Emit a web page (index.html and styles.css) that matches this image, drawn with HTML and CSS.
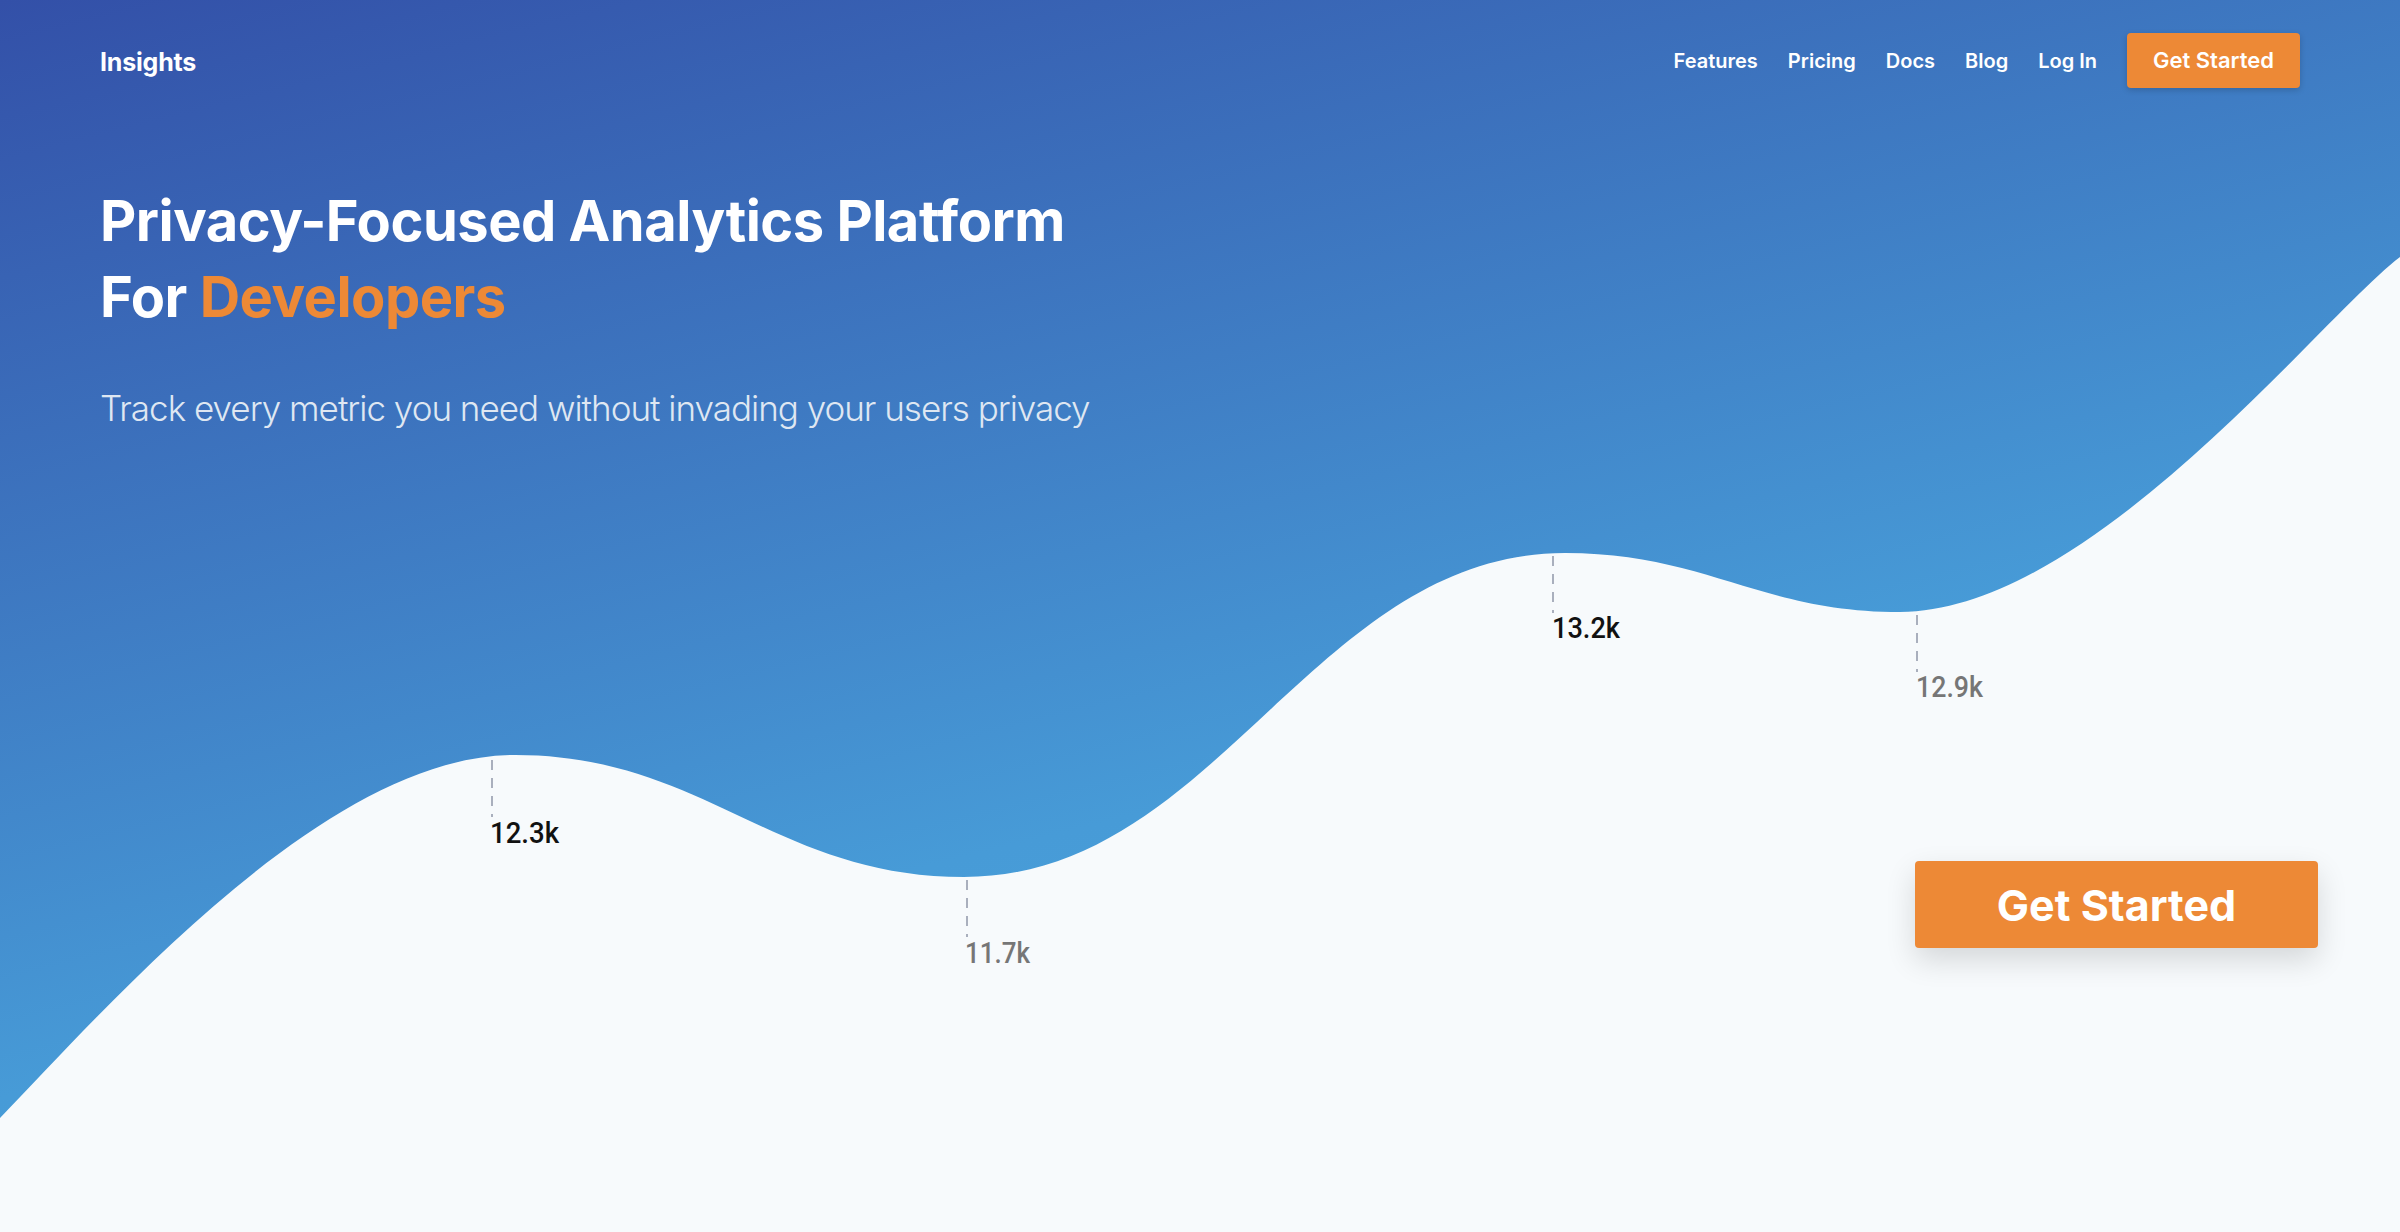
FILE: index.html
```html
<!DOCTYPE html>
<html lang="en">
<head>
<meta charset="utf-8">
<title>Insights</title>
<link rel="stylesheet" href="styles.css">
</head>
<body>
<div class="page">
  <svg class="chart" viewBox="0 0 2400 1232" width="2400" height="1232" aria-hidden="true">
    <path class="wave" d="M0,1118 C120,993 330,755 515,755 C704,755 775,877 964,877 C1216,877 1313,553 1565,553 C1705,553 1760,612 1900,612 C2090,612 2320,318 2400,257 L2400,1232 L0,1232 Z"/>
    <line class="tick" x1="492" y1="760" x2="492" y2="817"/>
    <line class="tick" x1="967" y1="880" x2="967" y2="937"/>
    <line class="tick" x1="1553" y1="556" x2="1553" y2="613"/>
    <line class="tick" x1="1917" y1="615" x2="1917" y2="672"/>
    <text class="val val-dark" x="490" y="843" textLength="69" lengthAdjust="spacingAndGlyphs">12.3k</text>
    <text class="val val-grey" x="965" y="963" textLength="65" lengthAdjust="spacingAndGlyphs">11.7k</text>
    <text class="val val-dark" x="1552" y="638" textLength="68" lengthAdjust="spacingAndGlyphs">13.2k</text>
    <text class="val val-grey" x="1916" y="697" textLength="67" lengthAdjust="spacingAndGlyphs">12.9k</text>
  </svg>

  <header class="nav">
    <a class="logo" href="#">Insights</a>
    <nav class="menu">
      <a class="menu-link" href="#">Features</a>
      <a class="menu-link" href="#">Pricing</a>
      <a class="menu-link" href="#">Docs</a>
      <a class="menu-link" href="#">Blog</a>
      <a class="menu-link" href="#">Log In</a>
      <a class="btn-small" href="#">Get Started</a>
    </nav>
  </header>

  <section class="hero">
    <h1 class="title">Privacy-Focused Analytics Platform<br>For <span class="accent">Developers</span></h1>
    <p class="subtitle">Track every metric you need without invading your users privacy</p>
  </section>

  <div class="cta-row">
    <a class="cta" href="#">Get Started</a>
  </div>
</div>
</body>
</html>
```

FILE: styles.css
```css
* { box-sizing: border-box; }

html, body {
  margin: 0;
  padding: 0;
  background: #f7fafc;
}

body {
  font-family: "Inter", "Liberation Sans", sans-serif;
  -webkit-font-smoothing: antialiased;
}

a { text-decoration: none; }

.page {
  position: relative;
  width: 2400px;
  height: 1232px;
  overflow: hidden;
  background: linear-gradient(166deg, #3350a8 0%, #479bd7 60%, #4fabe2 100%);
}

.chart {
  position: absolute;
  left: 0;
  top: 0;
  width: 2400px;
  height: 1232px;
}

.wave { fill: #f7fafc; }

.tick {
  stroke: #a9afbd;
  stroke-width: 2;
  stroke-dasharray: 10 8;
}

.val {
  font-family: "Roboto", "Liberation Sans", sans-serif;
  font-size: 30px;
  font-weight: 500;
}

.val-dark { fill: #111111; }
.val-grey { fill: #767676; }

.nav {
  position: relative;
  z-index: 1;
  display: flex;
  justify-content: space-between;
  align-items: center;
  padding: 33px 100px 0 100px;
}

.logo {
  color: #ffffff;
  font-size: 25px;
  font-weight: 700;
  letter-spacing: -0.2px;
  padding-top: 2px;
}

.menu {
  display: flex;
  align-items: center;
  gap: 30px;
}

.menu-link {
  color: #ffffff;
  font-size: 20px;
  font-weight: 600;
}

.btn-small {
  display: block;
  background: #ed8936;
  color: #ffffff;
  font-size: 22px;
  font-weight: 600;
  line-height: 25px;
  padding: 15px 26px;
  border-radius: 4px;
  box-shadow: 0 2px 6px rgba(0, 0, 0, 0.18);
}

.hero {
  position: relative;
  z-index: 1;
  padding: 0 100px;
  margin-top: 96px;
}

.title {
  margin: 0;
  color: #ffffff;
  font-size: 56px;
  font-weight: 700;
  line-height: 75.6px;
  letter-spacing: -0.5px;
}

.accent { color: #ed8936; }

.subtitle {
  margin: 46px 0 0 0;
  color: #dfe7f2;
  font-size: 35px;
  font-weight: 300;
  line-height: 54px;
  letter-spacing: -1px;
}

.cta-row {
  position: relative;
  z-index: 1;
  display: flex;
  justify-content: flex-end;
  padding-right: 82px;
  margin-top: 426px;
}

.cta {
  display: flex;
  justify-content: center;
  align-items: center;
  width: 403px;
  height: 87px;
  background: #ed8936;
  color: #ffffff;
  font-size: 43px;
  font-weight: 700;
  border-radius: 4px;
  box-shadow: 0 12px 30px rgba(0, 0, 0, 0.14);
}
```
